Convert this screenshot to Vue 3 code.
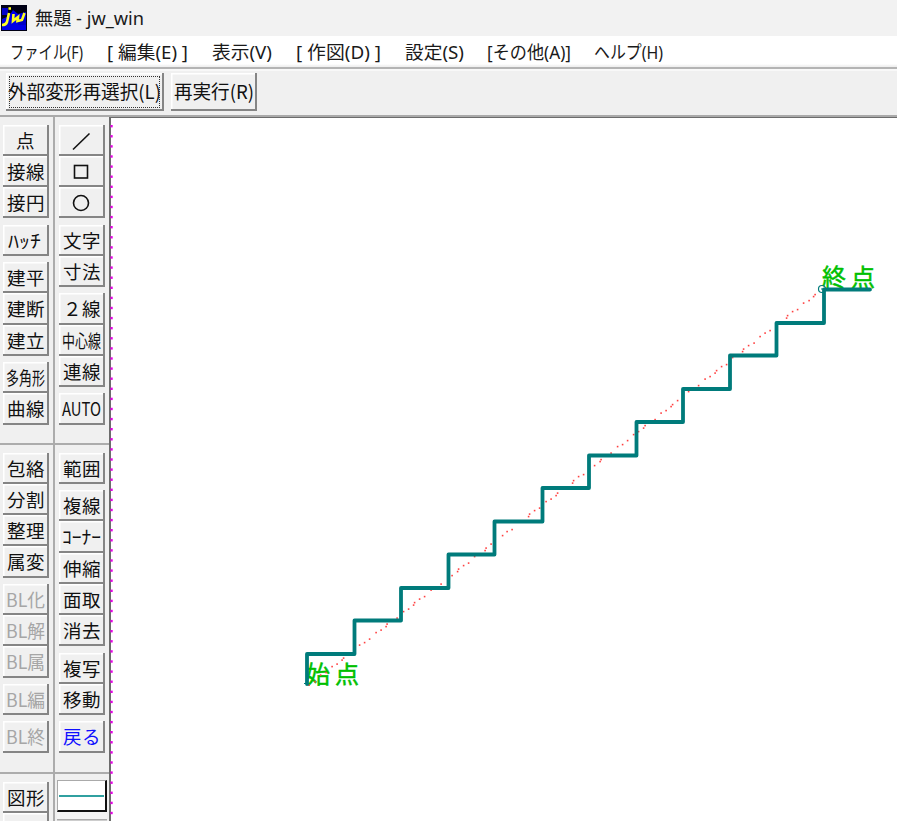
<template>
  <div class="window">
    <header class="titlebar">
      <svg class="logo" width="26" height="26" viewBox="0 0 26 26">
        <rect width="26" height="26" fill="#000014" />
        <path d="M1 25V14L8 11L12 5L17 9L25 7V25Z" fill="#0000e8" />
        <path d="M1 3H7V10H1ZM17 15L25 14V20H17Z" fill="#0000c8" />
        <path d="M7.500 3.500L10 3.500M8 8L6 17Q5 20 1 20M12.500 9L12 16L17 12L16.500 16L21 15L23.500 8" fill="none" stroke="#ffff20" stroke-width="2.600" />
      </svg>
      <svg class="title" width="120" height="36">
        <text x="0" y="25" font-size="18" textLength="109" lengthAdjust="spacingAndGlyphs">無題 - jw_win</text>
      </svg>
    </header>

    <nav class="menubar">
      <svg v-for="m in menus" :key="m.text" class="menu" :width="m.w" height="31" :style="{ marginLeft: m.gap + 'px' }">
        <text x="0" y="22.500" font-size="18" :textLength="m.w" lengthAdjust="spacingAndGlyphs">{{ m.text }}</text>
      </svg>
    </nav>

    <div class="toolbar">
      <button class="btn wide focused">
        <svg width="157" height="37">
          <text x="2" y="26" font-size="19" textLength="153" lengthAdjust="spacingAndGlyphs">外部変形再選択(L)</text>
        </svg>
      </button>
      <button class="btn wide rerun">
        <svg width="85" height="37">
          <text x="3" y="26" font-size="19" textLength="80" lengthAdjust="spacingAndGlyphs">再実行(R)</text>
        </svg>
      </button>
    </div>

    <div class="body">
      <aside class="panel">
        <section v-for="(section, s) in sections" :key="s" class="section" :class="'section' + s">
          <div v-for="(column, c) in section" :key="c" class="column">
            <div v-for="(group, g) in column" :key="g" class="group">
              <button v-for="label in group" :key="label" class="btn tool" :class="{ off: label.startsWith('BL'), back: label === '戻る' }">
                <svg width="45" height="31">
                  <path v-if="label === '／'" d="M14 24.500L30.500 8.500" class="shape" />
                  <rect v-else-if="label === '□'" x="15.500" y="9.500" width="13" height="12.500" class="shape" />
                  <circle v-else-if="label === '○'" cx="22" cy="16" r="7.500" class="shape" />
                  <text v-else-if="label" v-bind="fit(label)" y="22.800">{{ label }}</text>
                </svg>
              </button>
            </div>
            <div v-if="s === 2 && c === 1" class="linebox"><i></i></div>
          </div>
        </section>
      </aside>

      <main class="canvas">
        <svg width="788" height="704" viewBox="109 117 788 704">
          <rect v-for="n in 69" :key="n" x="110.500" :y="114.900 + n * 10.100" width="2.200" height="2.400" fill="#e600e6" />
          <g class="mark">
            <text x="306" y="683" font-size="24" textLength="53">始点</text>
            <text x="822" y="285.500" font-size="24" textLength="53">終点</text>
          </g>
          <rect v-for="(p, i) in dots" :key="'d' + i" :x="p[0] - 0.700" :y="p[1] - 0.700" width="1.600" height="1.600" fill="#ff4040" />
          <polyline :points="stairs" fill="none" stroke="#007b7b" stroke-width="3.800" stroke-linecap="round" stroke-linejoin="round" />
          <circle cx="822" cy="289" r="3.500" fill="none" stroke="#007b7b" stroke-width="1.200" />
          <path d="M821 289h4M304 683.500h5" stroke="#007b7b" stroke-width="1.200" />
        </svg>
      </main>
    </div>
  </div>
</template>

<script setup>
const menus = [
  { text: 'ファイル(F)', w: 73, gap: 10 },
  { text: '[ 編集(E) ]', w: 81, gap: 24 },
  { text: '表示(V)', w: 60, gap: 24 },
  { text: '[ 作図(D) ]', w: 85, gap: 24 },
  { text: '設定(S)', w: 59, gap: 24 },
  { text: '[その他(A)]', w: 84, gap: 23 },
  { text: 'ヘルプ(H)', w: 69, gap: 23 },
]

// section -> column -> group -> button
const sections = [
  [
    [['点', '接線', '接円'], ['ﾊｯﾁ'], ['建平', '建断', '建立'], ['多角形', '曲線']],
    [['／', '□', '○'], ['文字', '寸法'], ['２線', '中心線', '連線'], ['AUTO']],
  ],
  [
    [['包絡', '分割', '整理', '属変'], ['BL化', 'BL解', 'BL属'], ['BL編'], ['BL終']],
    [['範囲'], ['複線', 'ｺｰﾅｰ', '伸縮', '面取', '消去'], ['複写', '移動'], ['戻る']],
  ],
  [[['図形', '']], []],
]

const fit = (label) => {
  if (label === '点') return { x: 13 }
  if (label === 'ﾊｯﾁ') return { x: 5, textLength: 33, lengthAdjust: 'spacingAndGlyphs' }
  if (label.length === 2) return { x: 4, textLength: 37.5 }
  return { x: 3, textLength: 39, lengthAdjust: 'spacingAndGlyphs' }
}

const stairs = [
  [307, 684], [307, 654], [354.5, 654], [354.5, 620.5], [401, 620.5], [401, 588],
  [448.5, 588], [448.5, 554.5], [494.5, 554.5], [494.5, 521.5], [542.5, 521.5], [542.5, 488],
  [589, 488], [589, 455.5], [636.5, 455.5], [636.5, 422], [683, 422], [683, 389],
  [730, 389], [730, 355.5], [776.5, 355.5], [776.5, 323], [824, 323], [824, 289.5], [870, 289.5],
].map((p) => p.join(',')).join(' ')

const dots = [
  [309, 685], [315, 681.5], [320.5, 675], [326, 672.5], [332, 666.5], [337, 664], [342, 660], [343.5, 658],
  [359.5, 645], [364.5, 642.5], [369.5, 639], [376, 632.5], [381, 630], [386, 626.5], [387, 624],
  [397, 618], [403.5, 611.5], [408.5, 609], [413.5, 605], [414.5, 602.5], [419.5, 599], [424.5, 596.5],
  [431, 590], [441, 584], [452, 575.5], [457.5, 571.5], [458.5, 569], [463.5, 565.5], [468.5, 563],
  [474.5, 556.5], [485, 550.5], [486, 548], [491, 544], [502.5, 535.5], [507, 531.5], [512, 529.5],
  [528.5, 516.5], [529.5, 514], [534.5, 510.5], [539.5, 508], [546, 501.5], [551, 499], [556, 495.5],
  [557.5, 493], [572.5, 483], [573.5, 480.5], [578.5, 476.5], [583.5, 474.5], [594.5, 465.5],
  [600, 461.5], [601, 459.5], [611, 453], [617.5, 446.5], [622.5, 444.5], [627.5, 440.5], [633.5, 434.5],
  [638.5, 431.5], [643.5, 428], [645, 425.5], [655, 419.5], [661, 413], [666, 410.5], [671, 406.5],
  [672.5, 404.5], [677.5, 400.5], [688.5, 391.5], [698.5, 385.5], [705, 379], [710, 376.5], [715, 373],
  [716.5, 370.5], [721.5, 366.5], [726.5, 364.5], [732.5, 357.5], [742.5, 351.5], [743.5, 349],
  [748.5, 345.5], [754, 343], [760, 336.5], [765, 333], [770, 330.5], [786.5, 318], [787.5, 315.5],
  [792.5, 311.5], [797.5, 309.5], [803.5, 303], [809, 300.5], [813.5, 296.5], [815, 294.5],
]
</script>

<style scoped>
.window {
  width: 897px;
  height: 821px;
  overflow: hidden;
  display: flex;
  flex-direction: column;
  background: #f0f0f0;
  color: #1a1a1a;
  font-family: "Noto Sans", "Noto Sans CJK JP", sans-serif;
}
svg {
  display: block;
  flex: none;
  overflow: visible;
}
text {
  fill: currentColor;
}
.titlebar {
  height: 36px;
  flex: none;
  display: flex;
  background: #f2f2f2;
}
.logo {
  margin: 5px 8px 0 1px;
}
.menubar {
  height: 31px;
  flex: none;
  display: flex;
  background: linear-gradient(#fff 28px, #f0f0f0 30px);
}
.toolbar {
  height: 50px;
  box-sizing: border-box;
  flex: none;
  display: flex;
  padding: 4px 0 0 6px;
  border-top: 2px solid #b4b4b4;
  border-bottom: 2px solid #aaa;
  box-shadow: inset 0 2px #f8f8f8;
}
.btn {
  display: block;
  position: relative;
  box-sizing: border-box;
  padding: 0;
  border: 0;
  color: #111;
  background: #f0f0f0;
  font-family: "Noto Sans CJK JP", sans-serif;
  box-shadow: inset -2px -2px #858585, inset 1.5px 1.5px #fff;
}
.wide {
  width: 157.5px;
  height: 37.5px;
}
.rerun {
  width: 85.5px;
  margin-left: 7.5px;
}
.focused::after {
  content: "";
  position: absolute;
  inset: 3px 4px 3px 3px;
  border: 1.5px dotted #333;
}
.body {
  flex: 1;
  display: flex;
  min-height: 0;
}
.panel {
  width: 109px;
  flex: none;
}
.section {
  display: flex;
  box-sizing: border-box;
  border-bottom: 2px solid #acacac;
}
.section0 {
  height: 328px;
}
.section1 {
  height: 329px;
}
.section2 {
  height: 47px;
  border: 0;
}
.column {
  width: 55px;
  box-sizing: border-box;
  padding: 7.5px 0 0 3px;
  display: flex;
  flex-direction: column;
  gap: 6.25px;
  border-right: 2px solid #acacac;
}
.column + .column {
  width: 54px;
  border-right: 0;
  padding-left: 4px;
}
.tool {
  width: 45.5px;
  height: 31.25px;
  font-size: 18.5px;
}
.off {
  color: #a6a6a6;
}
.back {
  color: #1010ff;
}
.shape {
  fill: none;
  stroke: #111;
  stroke-width: 1.6;
}
.section2 .column + .column {
  padding: 6px 0 0 2px;
  overflow: hidden;
}
.linebox {
  width: 50px;
  height: 32px;
  box-sizing: border-box;
  border: 1px solid #aaa;
  border-right: 2.5px solid #111;
  border-bottom: 2.5px solid #111;
  background: #fff;
  padding: 14px 1px 0;
  box-shadow: 0 7px #f4f4f4, 0 8.5px #aaa;
}
.linebox i {
  display: block;
  height: 1.5px;
  background: #30a0a0;
}
.canvas {
  flex: 1;
  box-sizing: border-box;
  background: #fff;
  box-shadow: inset 2px 1px #6c6c6c;
}
.mark {
  color: #00c000;
  font-family: "Noto Sans CJK JP", sans-serif;
}
.mark text {
  stroke: #00c000;
  stroke-width: 0.5;
}
</style>
